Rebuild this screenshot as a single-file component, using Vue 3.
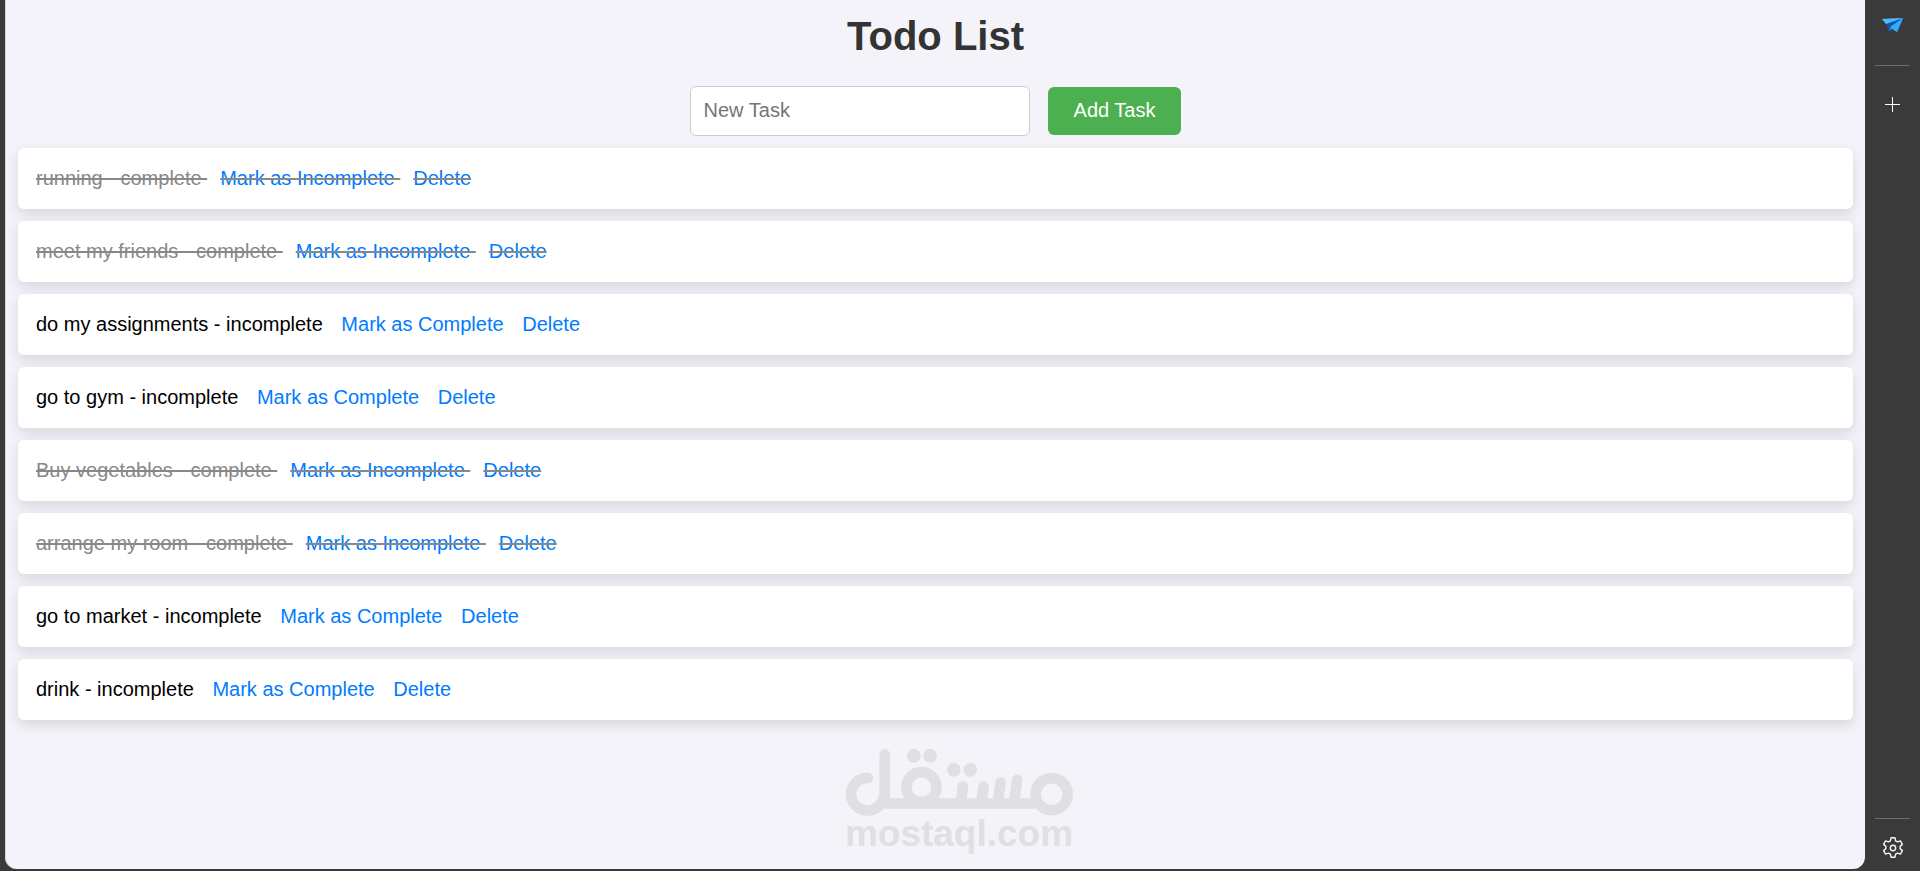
<script setup>
import { ref } from 'vue'

const draft = ref('')
const tasks = ref([
  { id: 1, title: 'running', done: true },
  { id: 2, title: 'meet my friends', done: true },
  { id: 3, title: 'do my assignments', done: false },
  { id: 4, title: 'go to gym', done: false },
  { id: 5, title: 'Buy vegetables', done: true },
  { id: 6, title: 'arrange my room', done: true },
  { id: 7, title: 'go to market', done: false },
  { id: 8, title: 'drink', done: false },
])

function addTask() {
  const title = draft.value.trim()
  if (!title) return
  tasks.value.push({ id: Date.now(), title, done: false })
  draft.value = ''
}

function remove(id) {
  tasks.value = tasks.value.filter((t) => t.id !== id)
}
</script>

<template>
  <div class="window">
    <main class="page">
      <h1 class="title">Todo List</h1>
      <form class="form" @submit.prevent="addTask">
        <input v-model="draft" class="field" type="text" placeholder="New Task" aria-label="New Task" />
        <button class="add" type="submit">Add Task</button>
      </form>
      <ul class="list">
        <li v-for="task in tasks" :key="task.id" class="task" :class="{ done: task.done }">
          <span>{{ task.title }} - {{ task.done ? 'complete' : 'incomplete' }}{{ ' ' }}</span>
          <a class="action" href="#" @click.prevent="task.done = !task.done">{{ task.done ? 'Mark as Incomplete' : 'Mark as Complete' }}{{ ' ' }}</a>
          <a class="action" href="#" @click.prevent="remove(task.id)">Delete</a>
        </li>
      </ul>
    </main>

    <aside class="sidebar">
      <button class="tool" type="button" aria-label="Send">
        <svg width="22" height="16" viewBox="0 0 22 16">
          <path d="M0 2 21 1 15 15 10 12 7 14 5 8Z" fill="#2196ec" />
          <path d="M0 2 21 1 5 8Z" fill="#55b7f7" />
          <path d="M4 7 21 1 9 10 7 14Z" fill="#0d56a8" />
          <path d="M8 10 21 1 15 15Z" fill="#35a9fa" />
        </svg>
      </button>
      <hr class="rule" />
      <button class="tool" type="button" aria-label="Add">
        <svg width="15" height="15" viewBox="0 0 15 15">
          <path d="M7.5 0V15M0 7.5H15" stroke="#fff" />
        </svg>
      </button>
      <hr class="rule low" />
      <button class="tool" type="button" aria-label="Settings">
        <svg width="22" height="22" viewBox="0 0 22 22" fill="none" stroke="#f4f4f4" stroke-width="1.4" stroke-linejoin="round">
          <path d="M9 .8h4l.6 3 1.9 1.100 2.900-1 2 3.500-2.300 2v2.200l2.300 2-2 3.500-2.900-1-1.900 1.100-.6 3H9l-.6-3-1.900-1.100-2.900 1-2-3.500 2.300-2V9.400l-2.300-2 2-3.500 2.900 1 1.900-1.100Z" />
          <circle cx="11" cy="11" r="2.700" />
        </svg>
      </button>
    </aside>

    <div class="watermark">
      <svg class="mark" viewBox="78 58 680 200" fill="none" stroke="currentColor" stroke-width="32" stroke-linecap="round">
        <path d="M143 144A49 49 0 1 0 185 217L194 200V74" />
        <path d="M180 221H660" stroke-linecap="butt" />
        <circle cx="304" cy="172" r="45" />
        <circle cx="694" cy="193" r="48" />
        <path d="M428 170 423 215M490 170 484 215M541 158 533 215M591 150 582 215" />
        <g fill="currentColor" stroke="none">
          <circle cx="281" cy="78" r="20.500" />
          <circle cx="330" cy="78" r="20.500" />
          <circle cx="401" cy="120" r="20.500" />
          <circle cx="450" cy="120" r="20.500" />
        </g>
      </svg>
      <span class="domain">mostaql.com</span>
    </div>
  </div>
</template>

<style>
body {
  margin: 0;
  background: #3a3a3a;
}
</style>

<style scoped>
.window {
  position: relative;
  display: flex;
  min-height: 100vh;
  box-sizing: border-box;
  padding: 0 0 2px 5px;
  background: #3a3a3a;
  font-family: Arial, "Liberation Sans", sans-serif;
  font-size: 20px;
}

.page {
  flex: 1;
  min-width: 0;
  box-sizing: border-box;
  padding: 12px 12px 12px 13px;
  background: #f4f3f9;
  border-radius: 0 0 12px 12px;
  box-shadow: inset 1px 0 #d4d4d8;
}

.title {
  margin: 0 0 26px;
  font-size: 40px;
  line-height: 48px;
  text-align: center;
  color: #333;
}

.form {
  display: flex;
  justify-content: center;
  align-items: center;
  gap: 18px;
  margin-bottom: 12px;
}

.field {
  box-sizing: border-box;
  width: 340px;
  height: 50px;
  padding: 0 13px 2px;
  border: 1px solid #ccc;
  border-radius: 6px;
  background: #fff;
  font: inherit;
}

.field::placeholder {
  color: #757575;
}

.add {
  height: 48px;
  padding: 0 26px 2px;
  border: 0;
  border-radius: 6px;
  background: #4caf50;
  color: #fff;
  font: inherit;
  cursor: pointer;
}

.list {
  display: flex;
  flex-direction: column;
  gap: 12px;
  margin: 0;
  padding: 0;
  list-style: none;
}

.task {
  display: flex;
  gap: 13px;
  padding: 18px;
  border-radius: 6px;
  background: #fff;
  box-shadow: 0 5px 13px rgba(0, 0, 0, 0.12);
  color: #000;
  line-height: 25px;
  white-space: pre-wrap;
}

.task.done {
  color: #888;
  text-decoration: line-through;
}

.action {
  color: #007bff;
  text-decoration: none;
}

.sidebar {
  display: flex;
  flex-direction: column;
  align-items: center;
  width: 55px;
  box-sizing: border-box;
  padding: 10px 0 6px;
}

.tool {
  display: flex;
  justify-content: center;
  align-items: center;
  width: 35px;
  height: 30px;
  padding: 0;
  border: 0;
  background: none;
  cursor: pointer;
}

.rule {
  width: 35px;
  height: 1px;
  margin: 25px 0 23px;
  border: 0;
  background: #6e6e6e;
}

.rule.low {
  margin: auto 0 14px;
}

.watermark {
  position: absolute;
  left: 0;
  right: 2px;
  bottom: 20px;
  display: flex;
  flex-direction: column;
  align-items: center;
  color: #e0dfe4;
  pointer-events: none;
}

.mark {
  width: 227px;
  height: 67px;
}

.domain {
  font-size: 37px;
  line-height: 35px;
  font-weight: 700;
}
</style>
